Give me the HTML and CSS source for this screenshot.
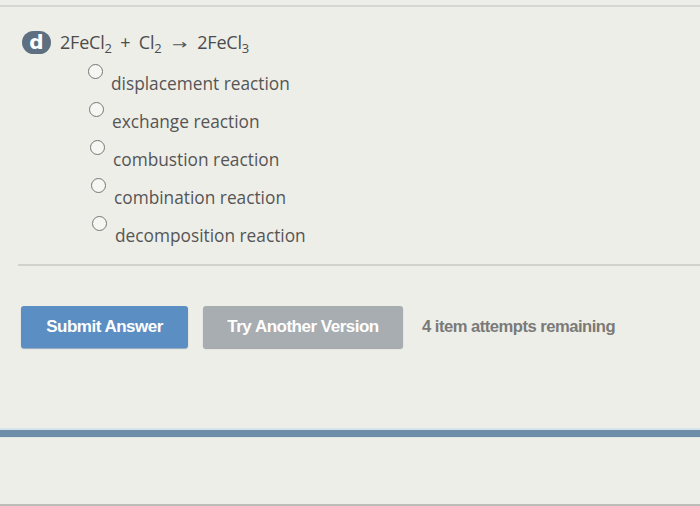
FILE: index.html
```html
<!DOCTYPE html>
<html>
<head>
<meta charset="utf-8">
<link rel="stylesheet" href="styles.css">
</head>
<body>
<div class="page">
  <div class="topline"></div>
  <div class="question">
    <span class="badge">d</span>
    <span class="equation">2FeCl<sub>2</sub> + Cl<sub>2</sub> <span class="arrow">→</span> 2FeCl<sub>3</sub></span>
  </div>
  <ul class="options">
    <li class="option o1"><span class="radio"></span><span class="label">displacement reaction</span></li>
    <li class="option o2"><span class="radio"></span><span class="label">exchange reaction</span></li>
    <li class="option o3"><span class="radio"></span><span class="label">combustion reaction</span></li>
    <li class="option o4"><span class="radio"></span><span class="label">combination reaction</span></li>
    <li class="option o5"><span class="radio"></span><span class="label">decomposition reaction</span></li>
  </ul>
  <div class="separator"></div>
  <div class="actions">
    <button class="btn btn-submit">Submit Answer</button>
    <button class="btn btn-try">Try Another Version</button>
    <span class="attempts">4 item attempts remaining</span>
  </div>
  <div class="band"></div>
  <div class="footer-line"></div>
</div>
</body>
</html>
```

FILE: styles.css
```css
html, body {
  margin: 0;
  padding: 0;
}
body {
  background: #eeeee9;
  width: 700px;
  height: 506px;
  overflow: hidden;
  font-family: "Open Sans", "DejaVu Sans", sans-serif;
}
.page {
  display: flex;
  flex-direction: column;
  height: 506px;
}
.topline {
  height: 0;
  margin-top: 5px;
  border-top: 2px solid #d6d6d2;
}
.question {
  display: flex;
  align-items: center;
  margin-top: 23px;
  padding-left: 22px;
  height: 26px;
}
.badge {
  width: 29px;
  height: 23px;
  border-radius: 12px;
  background: #5d6f80;
  color: #fff;
  font-family: "DejaVu Sans", sans-serif;
  font-weight: bold;
  font-size: 20px;
  line-height: 23px;
  text-align: center;
  margin-right: 9px;
}
.equation {
  font-size: 18px;
  color: #4c4c4c;
  letter-spacing: -0.2px;
  word-spacing: 4px;
}
.equation sub {
  font-size: 13px;
  vertical-align: -4px;
  line-height: 0;
}
.arrow {
  font-size: 13px;
  color: #555;
  display: inline-block;
  transform: scaleX(1.4);
  margin: 0 4px;
}
.options {
  list-style: none;
  margin: 10px 0 0 0;
  padding: 0 0 0 88px;
  display: flex;
  flex-direction: column;
  gap: 19px;
}
.option {
  display: flex;
  align-items: flex-start;
  height: 19px;
}
.o2 { padding-left: 1px; }
.o3 { padding-left: 2px; }
.o4 { padding-left: 3px; }
.o5 { padding-left: 4px; }
.radio {
  width: 13px;
  height: 13px;
  border: 1.6px solid #767676;
  border-radius: 50%;
  background: #f6f6f2;
  margin-top: 0;
  margin-right: 8px;
  flex: none;
}
.label {
  font-size: 17.3px;
  color: #555;
  line-height: 19px;
  margin-top: 10px;
  white-space: nowrap;
}
.separator {
  margin-top: 29px;
  margin-left: 18px;
  border-top: 2px solid #d2d2cd;
}
.actions {
  display: flex;
  align-items: center;
  margin-top: 40px;
  padding-left: 21px;
  gap: 15px;
}
.btn {
  height: 42px;
  border: none;
  border-radius: 3px;
  color: #fff;
  font-family: "Liberation Sans", Arial, sans-serif;
  font-weight: bold;
  font-size: 17px;
  letter-spacing: -0.5px;
  padding: 0;
}
.btn-submit {
  width: 167px;
  background: #5b8ec3;
  box-shadow: 0 1px 1px #8fa6bb;
}
.btn-try {
  width: 200px;
  background: #a8adb1;
  box-shadow: 0 1px 1px #9da2a6;
}
.attempts {
  margin-left: 4px;
  font-family: "Liberation Sans", Arial, sans-serif;
  font-weight: bold;
  font-size: 16.6px;
  letter-spacing: -0.5px;
  color: #7a7a78;
}
.band {
  margin-top: 80px;
  height: 11px;
  background: #6d8ca7;
  border-top: 2px solid #d5e3ee;
  border-bottom: 1px solid #dfe6ea;
}
.footer-line {
  margin-top: 66px;
  border-top: 2px solid #bdbdb8;
}
```
